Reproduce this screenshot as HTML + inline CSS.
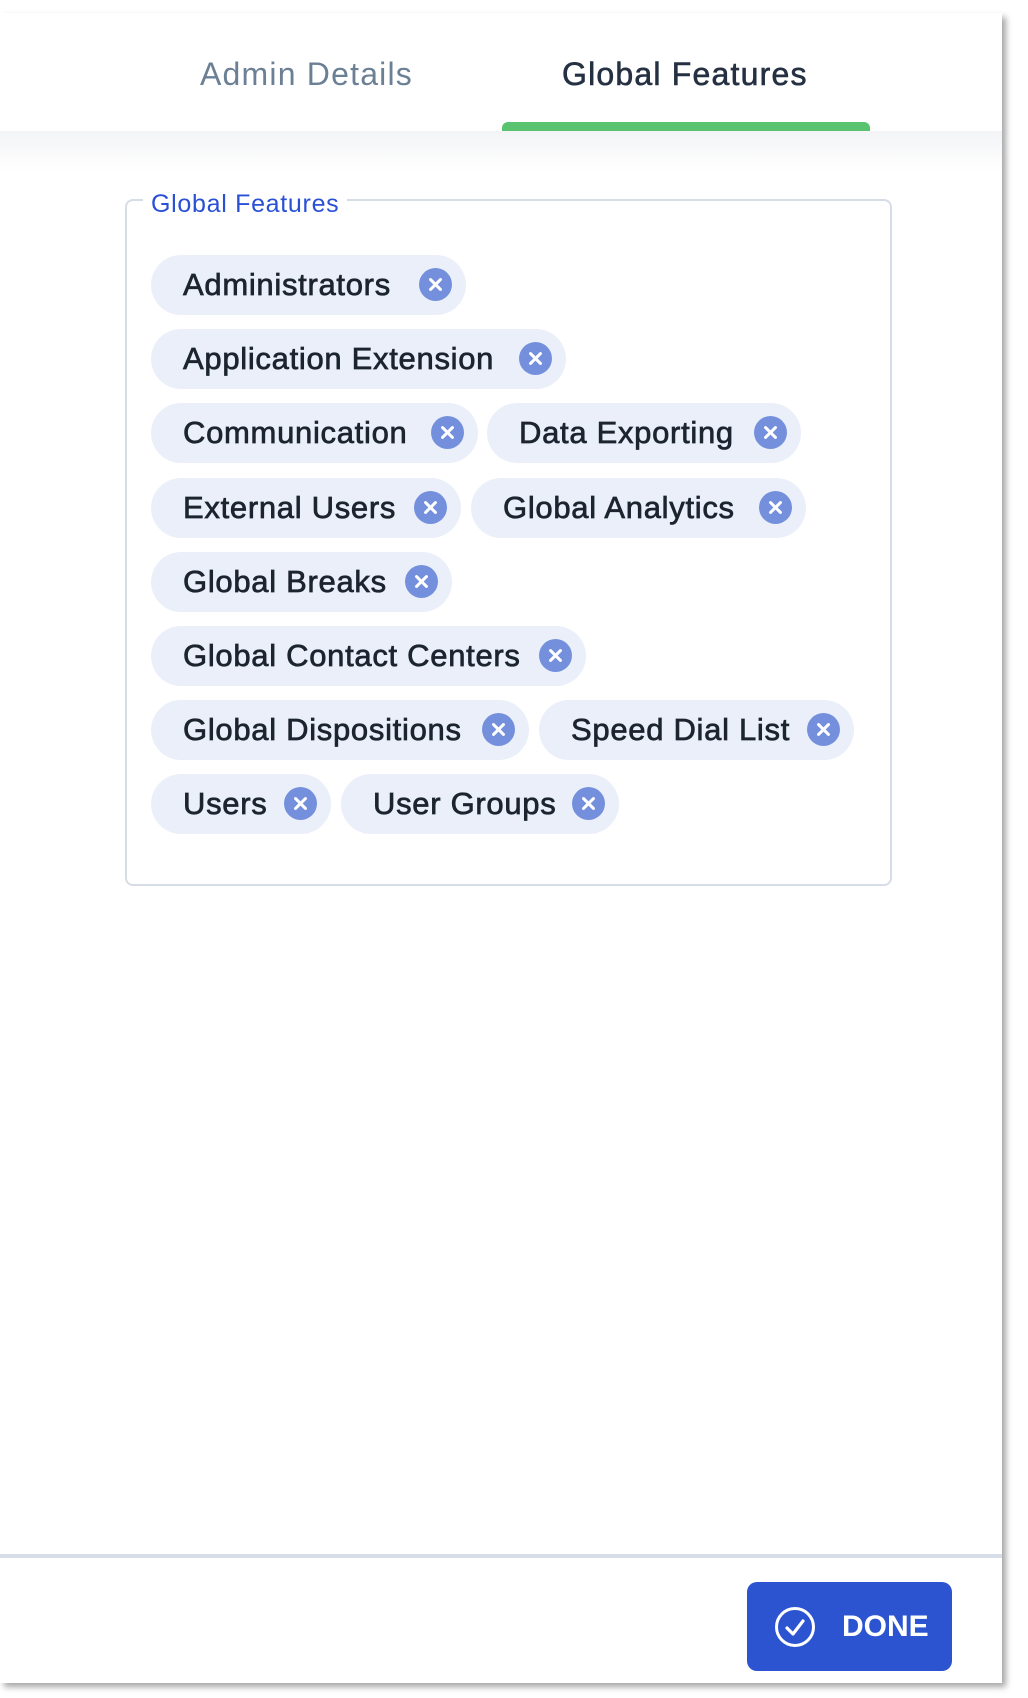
<!DOCTYPE html>
<html><head><meta charset="utf-8"><style>
html,body{margin:0;padding:0;background:#fff;}
body{width:1028px;height:1698px;position:relative;overflow:hidden;font-family:"Liberation Sans",sans-serif;}
.panel{position:absolute;left:0;top:13px;width:1002px;height:1670px;background:#fff;box-shadow:4px 4px 6px rgba(0,0,0,0.35);}
.header{position:absolute;left:0;top:13px;width:1002px;height:118px;background:#fff;}
.shade{position:absolute;left:0;top:131px;width:1002px;height:40px;background:linear-gradient(#f3f4f6,#fff);}
.tab{position:absolute;top:52px;font-size:32px;line-height:44px;letter-spacing:1.2px;}
.green{position:absolute;left:502px;top:122px;width:368px;height:9px;background:#5ac36f;border-radius:6px 6px 0 0;}
.fs{position:absolute;left:125px;top:199px;width:763px;height:683px;border:2px solid #d6dde6;border-radius:8px;}
.legend{position:absolute;left:143px;top:188px;padding:0 8px;background:#fff;color:#2a50d6;font-size:25px;line-height:32px;letter-spacing:0.7px;}
.chip{position:absolute;height:60px;background:#eaeff9;border-radius:30px;}
.chip span{position:absolute;left:32px;top:0;line-height:60px;font-size:31px;color:#1c2430;-webkit-text-stroke:0.7px #1c2430;white-space:nowrap;letter-spacing:0.7px;}
.chip i{position:absolute;right:14px;top:13px;width:33px;height:33px;border-radius:50%;background:#7490dd;}
.chip i:before,.chip i:after{content:"";position:absolute;left:15px;top:8px;width:3px;height:17px;background:#fff;border-radius:2px;transform:rotate(45deg);}
.chip i:after{transform:rotate(-45deg);}
.line{position:absolute;left:0;top:1554px;width:1002px;height:4px;background:#d6dee8;}
.btn{position:absolute;left:747px;top:1582px;width:205px;height:89px;background:#2c54d1;border-radius:10px;color:#fff;}
.btn span{position:absolute;left:95px;top:0;line-height:89px;font-size:30px;font-weight:bold;}
</style></head><body>
<div class="panel"></div>
<div class="shade"></div>
<div class="header"></div>
<div class="tab" style="left:200px;color:#6b7f95;">Admin Details</div>
<div class="tab" style="left:562px;color:#253142;-webkit-text-stroke:0.6px #253142;">Global Features</div>
<div class="green"></div>
<div class="fs"></div>
<div class="legend">Global Features</div>

<div class="chip" style="left:151px;top:255px;width:315px"><span>Administrators</span><i></i></div>
<div class="chip" style="left:151px;top:329px;width:415px"><span>Application Extension</span><i></i></div>
<div class="chip" style="left:151px;top:403px;width:327px"><span>Communication</span><i></i></div>
<div class="chip" style="left:487px;top:403px;width:314px"><span>Data Exporting</span><i></i></div>
<div class="chip" style="left:151px;top:478px;width:310px"><span>External Users</span><i></i></div>
<div class="chip" style="left:471px;top:478px;width:335px"><span>Global Analytics</span><i></i></div>
<div class="chip" style="left:151px;top:552px;width:301px"><span>Global Breaks</span><i></i></div>
<div class="chip" style="left:151px;top:626px;width:435px"><span>Global Contact Centers</span><i></i></div>
<div class="chip" style="left:151px;top:700px;width:378px"><span>Global Dispositions</span><i></i></div>
<div class="chip" style="left:539px;top:700px;width:315px"><span>Speed Dial List</span><i></i></div>
<div class="chip" style="left:151px;top:774px;width:180px"><span>Users</span><i></i></div>
<div class="chip" style="left:341px;top:774px;width:278px"><span>User Groups</span><i></i></div>

<div class="line"></div>
<div class="btn">
<svg style="position:absolute;left:27px;top:24px" width="42" height="42" viewBox="0 0 42 42"><circle cx="21" cy="21" r="18.5" fill="none" stroke="#fff" stroke-width="3"/><path d="M13 22 L19 28 L29 15" fill="none" stroke="#fff" stroke-width="3.2" stroke-linecap="round" stroke-linejoin="round"/></svg>
<span>DONE</span></div>
</body></html>
